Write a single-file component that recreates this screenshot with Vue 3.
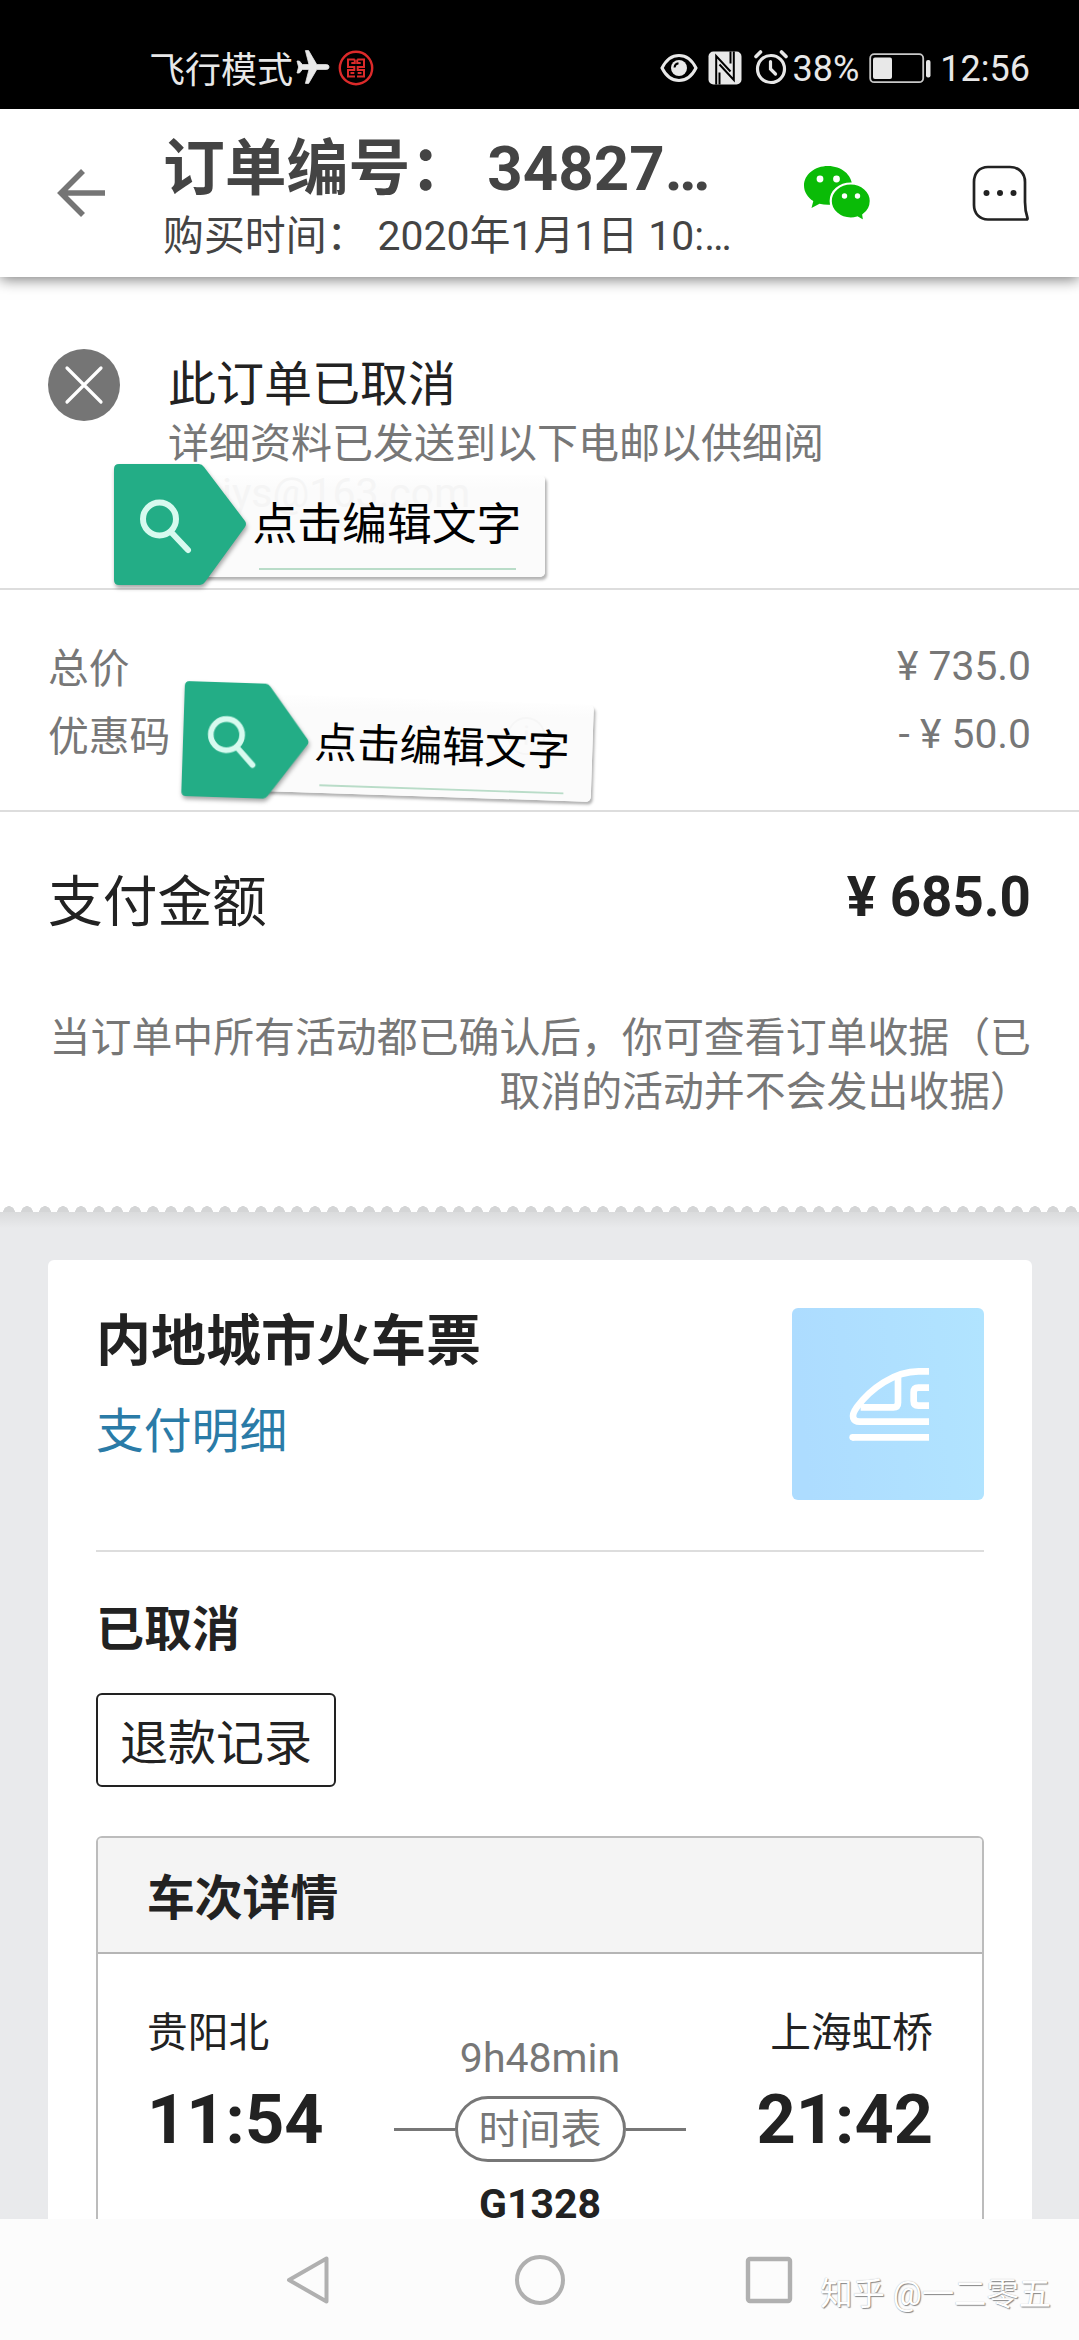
<script setup>
const prices = [
  { label: '总价', value: '¥ 735.0' },
  { label: '优惠码', value: '- ¥ 50.0' }
]
const stickers = ['sticker-email', 'sticker-code']
</script>

<template>
  <div class="screen">
    <div class="status">
      <div class="status-left">
        <span class="mode">飞行模式</span>
        <svg class="plane" width="34" height="34" viewBox="0 0 34 34"><path d="M33 17c0-1.600-1-2.400-2.600-2.400h-9.600L12.600.6H9.400l3.600 14H6.400L3.400 11H1l1.600 6L1 23h2.400l3-3.600H13l-3.600 14h3.200l8.200-14h9.600C32 19.400 33 18.600 33 17z" fill="#e8e8e8" stroke="#e8e8e8" stroke-width=".8" /></svg>
        <svg class="bank" width="38" height="38" viewBox="0 0 38 38" fill="none" stroke="#dc2a2a">
          <circle cx="19" cy="19" r="16.200" stroke-width="2.400" />
          <path d="M17.800 10.500H11V18h6.300v3H11v6.500h7M13.500 24h3.800M17.800 10.500v3.500h-3.500M20.200 10.500H27V18h-6.300v3H27v6.500h-7M24.500 24h-3.800M20.200 10.500v3.500h3.500" stroke-width="2" />
        </svg>
      </div>
      <div class="status-right">
        <svg width="38" height="30" viewBox="0 0 38 30" fill="none" stroke="#e8e8e8">
          <path d="M2 15C6.500 6 12 2.500 19 2.500S31.500 6 36 15c-4.500 9-10 12.500-17 12.500S6.500 24 2 15z" stroke-width="3" />
          <circle cx="19" cy="15" r="8" fill="#e8e8e8" stroke="none" /><path d="M14.500 14.500c.3-2.500 1.500-3.800 4-4.200" stroke="#000" stroke-width="2" />
        </svg>
        <svg class="nfc" width="34" height="34" viewBox="0 0 34 34">
          <rect x=".5" y=".5" width="33" height="33" rx="5" fill="#e8e8e8" />
          <path d="M8.200 33.500V5l14.300 15.500M25.800.5V29L11.500 13.500M22.500.5v12M11.500 33.500v-12" fill="none" stroke="#000" stroke-width="2" />
        </svg>
        <svg class="alarm" width="34" height="36" viewBox="0 0 34 36" fill="none" stroke="#e8e8e8" stroke-linecap="round">
          <circle cx="17" cy="20" r="13.500" stroke-width="3.200" /><path d="M16.500 12.500V20l5 5" stroke-width="3.200" /><path d="M2 7.500l4.500-4.500M32 7.500L27.500 3" stroke-width="3.600" />
        </svg>
        <span class="percent">38%</span>
        <svg class="battery" width="62" height="31" viewBox="0 0 62 31">
          <rect x="1.200" y="1.200" width="53" height="28" rx="4" fill="none" stroke="#c9c9c9" stroke-width="1.800" />
          <rect x="4" y="4.500" width="19" height="21.500" rx="2" fill="#e8e8e8" /><rect x="57" y="7" width="4.500" height="17.500" rx="2" fill="#e8e8e8" />
        </svg>
        <span class="clock">12:56</span>
      </div>
    </div>

    <header class="header">
      <svg class="back" width="50" height="50" viewBox="0 0 50 50" fill="none" stroke="#757575" stroke-width="5.600"><path d="M27 3L5 25l22 22M4 25h45" /></svg>
      <div class="titles">
        <h1>订单编号： 34827…</h1>
        <p>购买时间： 2020年1月1日 10:…</p>
      </div>
      <svg class="wechat" width="68" height="56" viewBox="0 0 68 56">
        <path d="M25 1C11.700 1 1 9.600 1 20.500c0 6.400 3.700 12 9.300 15.600L8.500 43l8-4.300c2.700.7 5.500 1.100 8.500 1.100 13.200 0 24-8.600 24-19.300S38.200 1 25 1z" fill="#0abb07" />
        <path d="M47.800 18.500C36.700 18.500 27.700 26.300 27.700 36s9 17.500 20.100 17.500c2.200 0 4.500-.4 6.500-1l7 4-1-6.500c4.500-3.200 7.500-8.100 7.500-14 0-9.700-9-17.500-20-17.500z" fill="#0abb07" stroke="#fff" stroke-width="2.200" />
        <g fill="#fff"><circle cx="17" cy="14" r="3.400" /><circle cx="33.500" cy="14" r="3.400" /><circle cx="41.500" cy="31" r="2.700" /><circle cx="54.500" cy="31" r="2.700" /></g>
      </svg>
      <svg class="chat" width="58" height="56" viewBox="0 0 58 56">
        <path d="M16 2h22c9 0 15 6.500 15 15v20c0 6 .8 11 2.500 16 .2 1-.2 1.500-1 1.500H16C7.500 54.500 2 48.500 2 40V17C2 8 7.500 2 16 2z" fill="none" stroke="#222" stroke-width="2.700" />
        <g fill="#222"><circle cx="14.500" cy="28" r="3" /><circle cx="28" cy="28" r="3" /><circle cx="41.500" cy="28" r="3" /></g>
      </svg>
    </header>

    <main class="content">
      <section class="notice">
        <svg class="cancelled" width="72" height="72" viewBox="0 0 72 72"><circle cx="36" cy="36" r="36" fill="#757575" /><path d="M19 19l34 34M53 19L19 53" stroke="#fff" stroke-width="3.200" stroke-linecap="round" /></svg>
        <div>
          <h2>此订单已取消</h2>
          <p>详细资料已发送到以下电邮以供细阅</p>
        </div>
      </section>

      <section class="prices">
        <div v-for="p in prices" :key="p.label" class="price-row"><span class="label">{{ p.label }}</span><span>{{ p.value }}</span></div>
      </section>

      <section class="total">
        <div class="total-row"><span class="label">支付金额</span><strong>¥ 685.0</strong></div>
        <p>当订单中所有活动都已确认后，你可查看订单收据（已<br />取消的活动并不会发出收据）</p>
      </section>
      <div class="scallop"></div>

      <div class="tickets">
        <article class="card">
          <div class="card-head">
            <div>
              <h3>内地城市火车票</h3>
              <a>支付明细</a>
            </div>
            <svg class="train" width="192" height="192" viewBox="156 144 576 576">
              <defs><linearGradient id="sky" x1="0" y1=".1" x2="1" y2="0"><stop offset="0" stop-color="#addcff" /><stop offset="1" stop-color="#b1e4ff" /></linearGradient></defs>
              <rect x="156" y="144" width="576" height="576" rx="18" fill="url(#sky)" />
              <g fill="none" stroke="#fff" stroke-width="20">
                <path d="M567 334h-31c-73 0-144 52-185 107-22 30-10 44 8 44h208" />
                <path d="M474 352v76q0 14-14 14h-98M567 383h-32q-14 0-14 14v26q0 14 14 14h32" />
                <path d="M337 532h230" /><path d="M338 532h1" stroke-linecap="round" />
              </g>
            </svg>
          </div>
          <h4>已取消</h4>
          <button class="refund">退款记录</button>
          <div class="trip">
            <div class="trip-head">车次详情</div>
            <div class="trip-body">
              <div class="stop"><div class="station">贵阳北</div><div class="time">11:54</div></div>
              <div class="middle">
                <div class="duration">9h48min</div>
                <div class="route"><i></i><span>时间表</span><i></i></div>
                <div class="number">G1328</div>
              </div>
              <div class="stop right"><div class="station">上海虹桥</div><div class="time">21:42</div></div>
            </div>
          </div>
        </article>
      </div>
    </main>

    <nav class="nav">
      <svg width="46" height="52" viewBox="0 0 46 52"><path d="M41.500 4.500v43L4 26z" fill="none" stroke="#b0b0b0" stroke-width="4" stroke-linejoin="round" /></svg>
      <svg class="home" width="52" height="52" viewBox="0 0 52 52"><circle cx="26" cy="26" r="23" fill="none" stroke="#b0b0b0" stroke-width="4" /></svg>
      <svg width="48" height="48" viewBox="0 0 48 48"><rect x="3" y="3" width="42" height="42" rx="2" fill="none" stroke="#b0b0b0" stroke-width="4.400" /></svg>
    </nav>
    <div class="watermark">知乎 @一二零五</div>

    <div v-for="name in stickers" :key="name" class="sticker" :class="name">
      <div class="paper">
        <span v-if="name === 'sticker-email'" class="faint">iys@163.com</span>
        <span v-else class="faint-info">i</span>
        <span class="edit">点击编辑文字</span>
      </div>
      <svg class="tag" width="136" height="124" viewBox="0 0 136 124">
        <path d="M5 0h80q3 0 5 3l41 54q2 3 0 6L91 118q-2 3-5 3H5q-5 0-5-5V5q0-5 5-5z" fill="#23ad86" />
        <g fill="none" stroke="#d7faef" stroke-width="6" stroke-linecap="round"><circle cx="45.500" cy="55" r="16.500" /><path d="M57 68l17 18" /></g>
      </svg>
    </div>
  </div>
</template>

<style>
html, body { margin: 0; background: #fff; }
</style>

<style scoped>
.screen {
  position: relative;
  display: flex;
  flex-direction: column;
  width: 1079px;
  height: 2340px;
  overflow: hidden;
  color: #222;
  background: #fff;
  font-family: Roboto, "Noto Sans CJK SC", sans-serif;
  white-space: nowrap;
}
svg { display: block; flex: none; }
h1, h2, h3, h4, p { margin: 0; }
.status {
  flex: none;
  display: flex;
  justify-content: space-between;
  height: 109px;
  box-sizing: border-box;
  padding: 29px 49px 0 149px;
  background: #000;
  color: #e8e8e8;
  font-size: 36px;
}
.status-left, .status-right { display: flex; align-items: center; height: 80px; }
.mode { margin-top: -4px; }
.plane { margin: -5px 0 0 3px; }
.bank { margin: -3px 0 0 7px; }
.nfc { margin-left: 10px; }
.alarm { margin: -3px 0 0 12px; }
.status-right > svg { position: relative; top: -1px; }
.percent { margin-left: 5px; }
.battery { margin-left: 10px; }
.clock { margin-left: 9px; }
.header {
  position: relative;
  z-index: 1;
  flex: none;
  display: flex;
  height: 168px;
  background: #fff;
  box-shadow: 0 2px 14px rgba(0, 0, 0, .55);
}
.back { margin: 59px 0 0 56px; }
.titles { width: 638px; margin: 24px 0 0 57px; color: #444; }
h1 { font-size: 61.800px; line-height: 72px; }
.titles p { margin-top: 4px; font-size: 40.900px; line-height: 54px; }
.wechat { margin: 56px 0 0 2px; }
.chat { margin: 56px 0 0 101px; }
.content { flex: none; height: 1942px; overflow: hidden; }
.notice {
  display: flex;
  height: 313px;
  box-sizing: border-box;
  padding: 72px 48px 0;
  border-bottom: 2px solid #ddd;
}
.notice > div { margin: 6px 0 0 48px; }
h2 { font-size: 48px; line-height: 60px; font-weight: 400; }
.notice p { margin-top: 5px; color: #777; font-size: 41px; line-height: 48px; }
.prices {
  height: 222px;
  box-sizing: border-box;
  padding: 49px 48px 0;
  border-bottom: 2px solid #ddd;
  color: #777;
  font-size: 40.800px;
  line-height: 54px;
}
.price-row { display: flex; justify-content: space-between; height: 67.500px; }
.price-row .label { padding-top: 3px; }
.total { height: 394px; box-sizing: border-box; padding: 50px 48px 0; }
.total-row { display: flex; justify-content: space-between; height: 70px; font-size: 54.700px; line-height: 70px; }
.total-row .label { padding-top: 5px; }
.total p { margin: 79px 0 0 -4px; color: #777; font-size: 40.900px; line-height: 54px; text-align: right; }
.scallop { height: 6px; background: radial-gradient(ellipse 6px 6px at 50% 100%, #d4d5d6 92%, #fff) 0 0 / 18px 6px; }
.tickets {
  height: 1100px;
  padding: 48px 47px 0 48px;
  background: linear-gradient(#dadbdc, #e9eaec 16px);
}
.card { height: 1100px; box-sizing: border-box; padding: 48px; border-radius: 6px; background: #fff; }
.card-head { display: flex; justify-content: space-between; height: 242px; border-bottom: 2px solid #ddd; }
h3 { padding-top: 2px; font-size: 55px; line-height: 62px; }
.card a { display: block; margin-top: 30px; color: #2a7ba7; font-size: 47.800px; line-height: 60px; }
h4 { margin-top: 48px; font-size: 48px; line-height: 60px; }
.refund {
  display: block;
  width: 240px;
  height: 94px;
  margin-top: 33px;
  padding: 8px 0 0;
  border: 2px solid #222;
  border-radius: 6px;
  background: #fff;
  color: #222;
  font: inherit;
  font-size: 48px;
  line-height: 70px;
}
.trip { height: 500px; margin-top: 49px; border: 2px solid #bcbcbc; border-radius: 6px; overflow: hidden; }
.trip-head {
  height: 106px;
  padding: 8px 49px 0;
  border-bottom: 2px solid #b5b5b5;
  background: #f4f4f4;
  font-size: 47.800px;
  line-height: 106px;
  font-weight: 700;
}
.trip-body { display: grid; grid-template-columns: 1fr 292px 1fr; padding: 0 49px; }
.stop { padding-top: 52px; }
.right { text-align: right; }
.station { font-size: 40.700px; line-height: 54px; }
.time { margin-top: 20px; font-size: 68.500px; line-height: 80px; font-weight: 700; }
.middle { padding-top: 77px; text-align: center; font-size: 41px; line-height: 54px; }
.duration { color: #777; }
.route { display: flex; align-items: center; margin-top: 11px; color: #777; }
.route i { flex: 1; height: 3px; background: #777; }
.route span { width: 171px; height: 66px; box-sizing: border-box; border: 3px solid #777; border-radius: 33px; line-height: 63px; }
.number { margin-top: 15px; font-size: 41px; font-weight: 700; }
.nav {
  flex: none;
  display: flex;
  align-items: center;
  justify-content: space-between;
  height: 121px;
  box-sizing: border-box;
  padding: 0 286px 0 285px;
  background: #fcfcfc;
}
.home { margin-left: 3px; }
.watermark {
  position: absolute;
  right: 28px;
  bottom: 24px;
  color: #fff;
  font-size: 32.300px;
  line-height: 44px;
  text-shadow: 1px 1px 1px #888, 0 0 1px #aaa;
}
.sticker { position: absolute; z-index: 2; width: 431px; height: 121px; transform-origin: 0 0; }
.sticker-email { left: 114px; top: 464px; }
.sticker-code { left: 185px; top: 681px; transform: rotate(1.900deg) scale(.95); }
.tag { position: absolute; left: 0; top: 0; overflow: visible; filter: drop-shadow(1px 3px 2px rgba(0, 0, 0, .35)); }
.paper {
  position: absolute;
  inset: 11px 0 8px 60px;
  border-radius: 5px;
  background: linear-gradient(#fefefe, #fbfbfb 14px);
  box-shadow: 2px 3px 3px rgba(0, 0, 0, .3);
}
.edit {
  position: absolute;
  left: 78.500px;
  top: 18px;
  color: #000;
  font-size: 44.800px;
  line-height: 64px;
}
.edit::after { content: ""; position: absolute; left: 6px; right: 5px; top: 75px; height: 2px; background: #b9dcc8; }
.faint { position: absolute; left: 48px; top: -6px; color: #f5f5f5; font-size: 41px; line-height: 48px; }
.faint-info {
  position: absolute;
  left: 281px;
  top: 15px;
  width: 36px;
  height: 36px;
  border: 2px solid #f6f6f6;
  border-radius: 50%;
  color: #f6f6f6;
  font-size: 28px;
  line-height: 36px;
  text-align: center;
}
</style>
